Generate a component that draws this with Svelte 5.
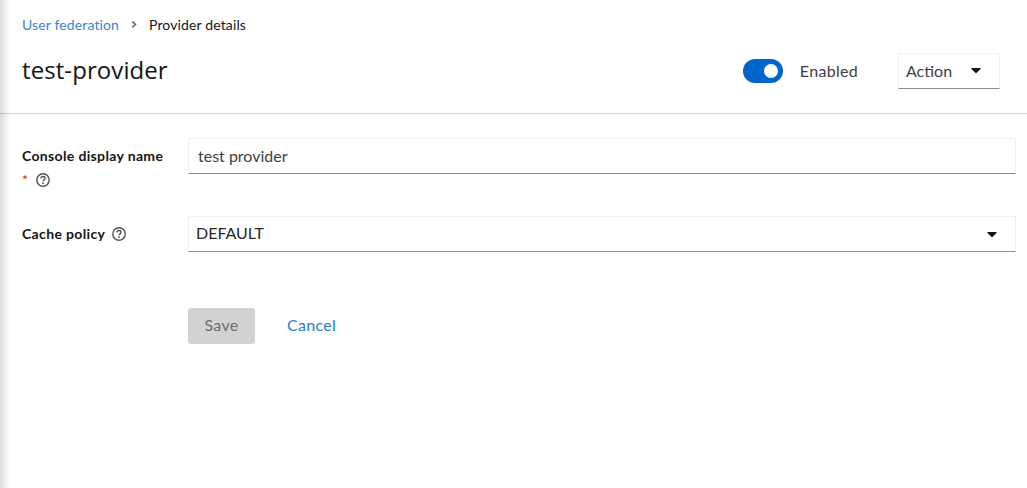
<script>
  let enabled = $state(true);
  let displayName = $state('test provider');
</script>

<div class="page">
  <div class="edge"></div>
  <header class="head">
    <nav class="crumbs">
      <a href="#top">User federation</a>
      <svg class="sep" viewBox="0 0 256 512" width="7" height="11" aria-hidden="true"><path fill="#6a6e73" d="M224 256L72 408c-9 9-25 9-34 0l-23-23c-9-9-9-25 0-34l108-95L15 161c-9-9-9-25 0-34l23-23c9-9 25-9 34 0z"/></svg>
      <span>Provider details</span>
    </nav>
    <div class="title-row">
      <h1>test-provider</h1>
      <div class="tools">
        <label class="switch">
          <input type="checkbox" bind:checked={enabled} />
          <span class="track"><span class="knob"></span></span>
          <span class="switch-label">Enabled</span>
        </label>
        <button class="action" type="button">
          <span>Action</span>
          <svg class="caret" viewBox="0 0 320 512" width="10" height="16" aria-hidden="true"><path fill="#151515" d="M31 192h258c18 0 27 22 14 34L174 355c-8 8-20 8-28 0L17 226c-13-12-4-34 14-34z"/></svg>
        </button>
      </div>
    </div>
  </header>

  <form class="form">
    <div class="row row-name">
      <div class="label">
        <span class="label-text">Console display name</span>
        <span class="label-meta">
          <span class="req">*</span>
          <svg class="help" viewBox="0 0 16 16" width="16" height="16" aria-hidden="true"><circle cx="8" cy="8" r="6.2" fill="none" stroke="#4f5255" stroke-width="1.4"/><path d="M5.9 6.4c0-1.2.9-1.9 2.1-1.9s2.1.7 2.1 1.8c0 1.7-2.1 1.5-2.1 3" fill="none" stroke="#4f5255" stroke-width="1.3"/><circle cx="8" cy="11.2" r=".9" fill="#4f5255"/></svg>
        </span>
      </div>
      <input class="control text" type="text" bind:value={displayName} />
    </div>

    <div class="row row-cache">
      <div class="label inline">
        <span class="label-text">Cache policy</span>
        <svg class="help" viewBox="0 0 16 16" width="16" height="16" aria-hidden="true"><circle cx="8" cy="8" r="6.2" fill="none" stroke="#4f5255" stroke-width="1.4"/><path d="M5.9 6.4c0-1.2.9-1.9 2.1-1.9s2.1.7 2.1 1.8c0 1.7-2.1 1.5-2.1 3" fill="none" stroke="#4f5255" stroke-width="1.3"/><circle cx="8" cy="11.2" r=".9" fill="#4f5255"/></svg>
      </div>
      <button class="control select" type="button">
        <span>DEFAULT</span>
        <svg class="caret" viewBox="0 0 320 512" width="10" height="16" aria-hidden="true"><path fill="#151515" d="M31 192h258c18 0 27 22 14 34L174 355c-8 8-20 8-28 0L17 226c-13-12-4-34 14-34z"/></svg>
      </button>
    </div>

    <div class="actions">
      <button class="save" type="button" disabled>Save</button>
      <a class="cancel" href="#top">Cancel</a>
    </div>
  </form>
</div>

<style>
  :global(body) {
    margin: 0;
    background: #fff;
  }
  .page {
    position: relative;
    height: 488px;
    overflow: hidden;
    font-family: Lato, "Liberation Sans", sans-serif;
    color: #151515;
    background: #fff;
  }
  .edge {
    position: absolute;
    inset: 0 auto 0 0;
    width: 10px;
    background: linear-gradient(to right, rgba(0, 0, 0, 0.14), rgba(0, 0, 0, 0));
    pointer-events: none;
  }
  .head {
    height: 114px;
    box-sizing: border-box;
    padding: 15px 27px 0 22px;
    border-bottom: 1px solid #d2d2d2;
  }
  .crumbs {
    display: flex;
    align-items: center;
    height: 19px;
    font-size: 14px;
    letter-spacing: 0.13px;
    color: #151515;
  }
  .crumbs a {
    color: #06c;
    text-decoration: none;
    opacity: 0.8;
  }
  .sep {
    margin: 0 11px 0 12px;
  }
  .title-row {
    display: flex;
    align-items: center;
    justify-content: space-between;
    margin-top: 19px;
    height: 36px;
  }
  h1 {
    margin: 0;
    font-family: "Open Sans", sans-serif;
    font-size: 24px;
    font-weight: 400;
    line-height: 36px;
    letter-spacing: 0.08px;
    color: #151515;
    transform: translateY(-1px);
  }
  .tools {
    display: flex;
    align-items: center;
  }
  .switch {
    display: flex;
    align-items: center;
    margin-right: 40px;
  }
  .switch input {
    position: absolute;
    opacity: 0;
    width: 0;
    height: 0;
  }
  .track {
    display: flex;
    align-items: center;
    justify-content: flex-end;
    box-sizing: border-box;
    width: 40px;
    height: 24px;
    padding-right: 5px;
    border-radius: 12px;
    background: #06c;
  }
  .knob {
    width: 14px;
    height: 14px;
    border-radius: 50%;
    background: #fff;
  }
  .switch-label {
    margin-left: 17px;
    padding-bottom: 2px;
    font-size: 16px;
    letter-spacing: 0.3px;
    color: #3c3f42;
  }
  .action {
    display: flex;
    align-items: center;
    justify-content: space-between;
    box-sizing: border-box;
    width: 102px;
    height: 36px;
    padding: 0 18px 2px 7px;
    background: #fff;
    border: 1px solid #f0f0f0;
    border-bottom: 1px solid #8a8d90;
    font: inherit;
    font-size: 16px;
    color: #3c3f42;
  }
  .form {
    padding: 24px 11px 0 22px;
  }
  .row {
    display: grid;
    grid-template-columns: 166px 1fr;
  }
  .row-name {
    height: 78px;
  }
  .row-cache {
    height: 92px;
  }
  .label {
    font-size: 14px;
    font-weight: 700;
    line-height: 20px;
    letter-spacing: 0.35px;
    padding-top: 8px;
  }
  .label-text {
    display: block;
  }
  .label.inline {
    display: flex;
    align-items: center;
    gap: 6px;
    align-self: start;
    height: 36px;
    padding-top: 0;
  }
  .label-meta {
    display: flex;
    align-items: center;
    gap: 7px;
    margin-top: 6px;
    height: 16px;
  }
  .req {
    width: 6px;
    color: #c9190b;
    font-size: 14px;
    font-weight: 400;
    letter-spacing: 0;
  }
  .control {
    box-sizing: border-box;
    width: 100%;
    height: 36px;
    background: #fff;
    border: 1px solid #f0f0f0;
    border-bottom: 1px solid #8a8d90;
    font: inherit;
    font-size: 16px;
    color: #3c3f42;
    outline: none;
  }
  .text {
    padding: 0 9px 2px;
  }
  .select {
    display: flex;
    align-items: center;
    justify-content: space-between;
    padding: 0 18px 0 7px;
    color: #26282a;
  }
  .select span {
    padding-bottom: 4px;
  }
  .actions {
    display: flex;
    align-items: center;
    margin-left: 166px;
  }
  .save {
    width: 67px;
    height: 36px;
    padding: 0 0 4px;
    border: 0;
    border-radius: 3px;
    background: #d2d2d2;
    font: inherit;
    font-size: 16px;
    letter-spacing: 0.3px;
    color: #6a6e73;
  }
  .cancel {
    margin-left: 32px;
    padding-bottom: 4px;
    font-size: 16px;
    letter-spacing: 0.3px;
    color: #06c;
    text-decoration: none;
    opacity: 0.85;
  }
</style>
